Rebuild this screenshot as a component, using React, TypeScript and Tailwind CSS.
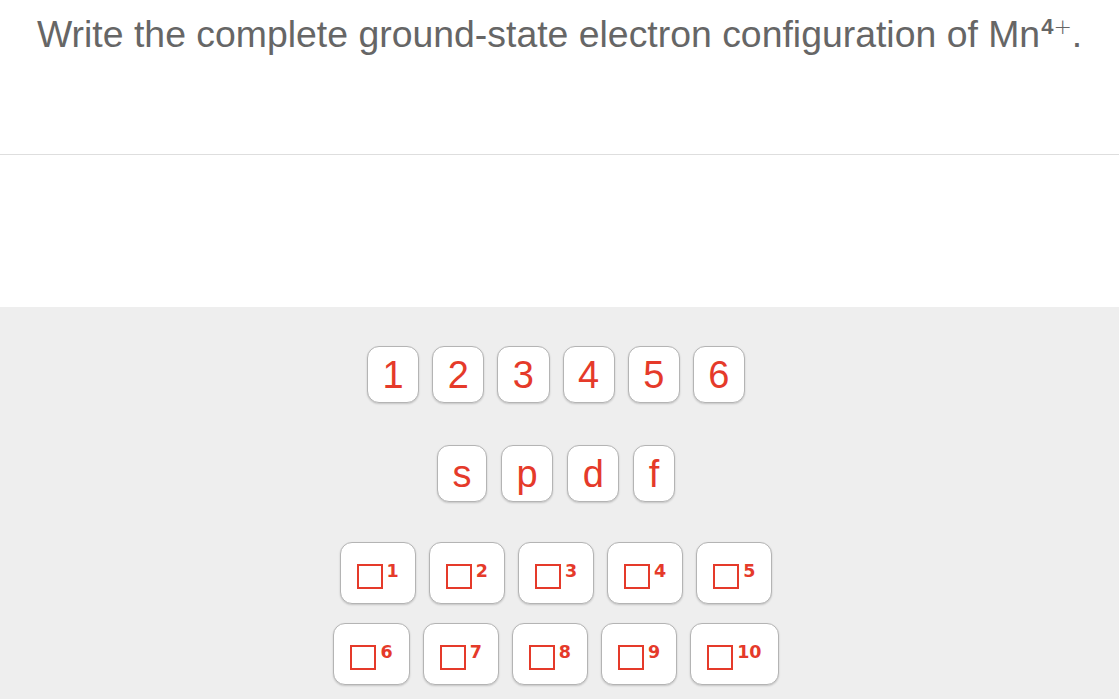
const digits = ["1", "2", "3", "4", "5", "6"];
const orbitals = ["s", "p", "d", "f"];
const supsTop = ["1", "2", "3", "4", "5"];
const supsBottom = ["6", "7", "8", "9", "10"];

const keyBase =
  "bg-white border border-[#b4b4b4] rounded-[12px] shadow-[0_1px_2px_rgba(0,0,0,0.18)] text-[#e53a2a]";

function TextKey({ label }: { label: string }) {
  return (
    <button
      className={`${keyBase} h-[57px] px-[14.5px] flex items-center justify-center text-[38px] leading-none`}
      style={{ fontFamily: '"Liberation Sans", Arial, sans-serif' }}
    >
      {label}
    </button>
  );
}

function SupKey({ exp }: { exp: string }) {
  return (
    <button className={`${keyBase} h-[62px] px-4 pt-[21px] flex items-start justify-center`}>
      <span className="block w-[26px] h-[25px] border-2 border-[#e53a2a]" />
      <span
        className="ml-[4px] -mt-[1px] text-[17.5px] font-bold leading-none"
        style={{ fontFamily: '"DejaVu Sans", Verdana, sans-serif' }}
      >
        {exp}
      </span>
    </button>
  );
}

export default function App() {
  return (
    <div
      className="min-h-[699px] bg-white flex flex-col"
      style={{ fontFamily: '"Liberation Sans", Arial, sans-serif' }}
    >
      <div className="h-[155px] border-b border-[#dedede] pl-[37px] pt-[12px]">
        <h1 className="text-[37.4px] leading-[44px] text-[#666666] font-normal">
          Write the complete ground-state electron configuration of Mn
          <sup className="text-[22px] -top-[13px] ml-[1px]">
            <span className="font-bold">4</span>
            <span style={{ fontFamily: '"DejaVu Sans", sans-serif', fontWeight: 200 }}>+</span>
          </sup>
          .
        </h1>
      </div>
      <div className="h-[152px]" />
      <div className="flex-1 bg-[#eeeeee] pt-[39px] pb-[13px] pr-[7px] flex flex-col items-center">
        <div className="flex gap-[13px]">
          {digits.map((d) => (
            <TextKey key={d} label={d} />
          ))}
        </div>
        <div className="flex gap-[14px] mt-[42px]">
          {orbitals.map((o) => (
            <TextKey key={o} label={o} />
          ))}
        </div>
        <div className="flex gap-[13px] mt-[40px]">
          {supsTop.map((s) => (
            <SupKey key={s} exp={s} />
          ))}
        </div>
        <div className="flex gap-[13px] mt-[19px]">
          {supsBottom.map((s) => (
            <SupKey key={s} exp={s} />
          ))}
        </div>
      </div>
    </div>
  );
}
